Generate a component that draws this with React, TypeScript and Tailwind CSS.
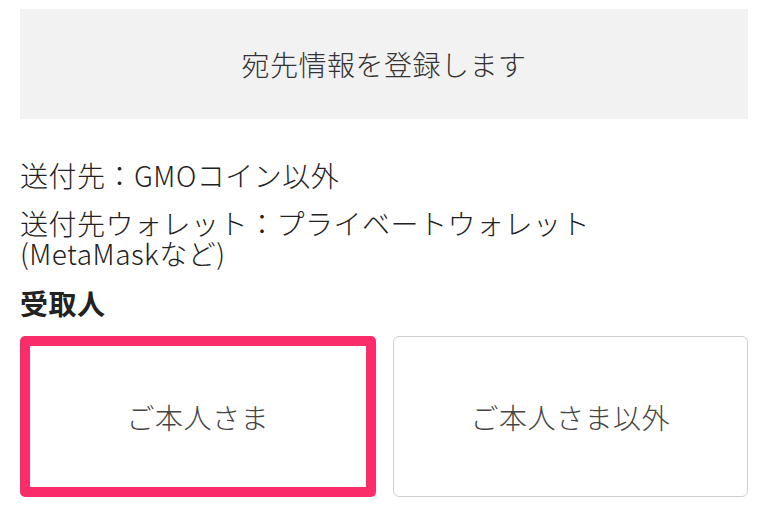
export default function App() {
  return (
    <div
      className="w-[768px] h-[512px] overflow-hidden bg-white px-5 pt-[9px] text-[#222] font-light tracking-[0.5px]"
      style={{ fontFamily: '"Noto Sans CJK JP", "Noto Sans", sans-serif' }}
    >
      <div className="flex h-[110px] items-center justify-center bg-[#f2f2f2] text-[28px] text-[#333]">
        宛先情報を登録します
      </div>

      <div className="mt-[41px] text-[28px] leading-[30px]">
        <p>送付先：GMOコイン以外</p>
        <p className="mt-[18px]">
          送付先ウォレット：プライベートウォレット
          <br />
          (MetaMaskなど)
        </p>
        <p className="mt-[20px] font-bold">受取人</p>
      </div>

      <div className="mt-[18px] grid grid-cols-2 gap-[17px]">
        <button className="flex h-[161px] items-center justify-center rounded-[5px] border-[10px] border-[#fb2c6a] bg-white text-[28px] text-[#444]">
          ご本人さま
        </button>
        <button className="flex h-[161px] items-center justify-center rounded-[6px] border-[1.5px] border-[#cfcfcf] bg-white text-[28px] text-[#444]">
          ご本人さま以外
        </button>
      </div>
    </div>
  );
}
